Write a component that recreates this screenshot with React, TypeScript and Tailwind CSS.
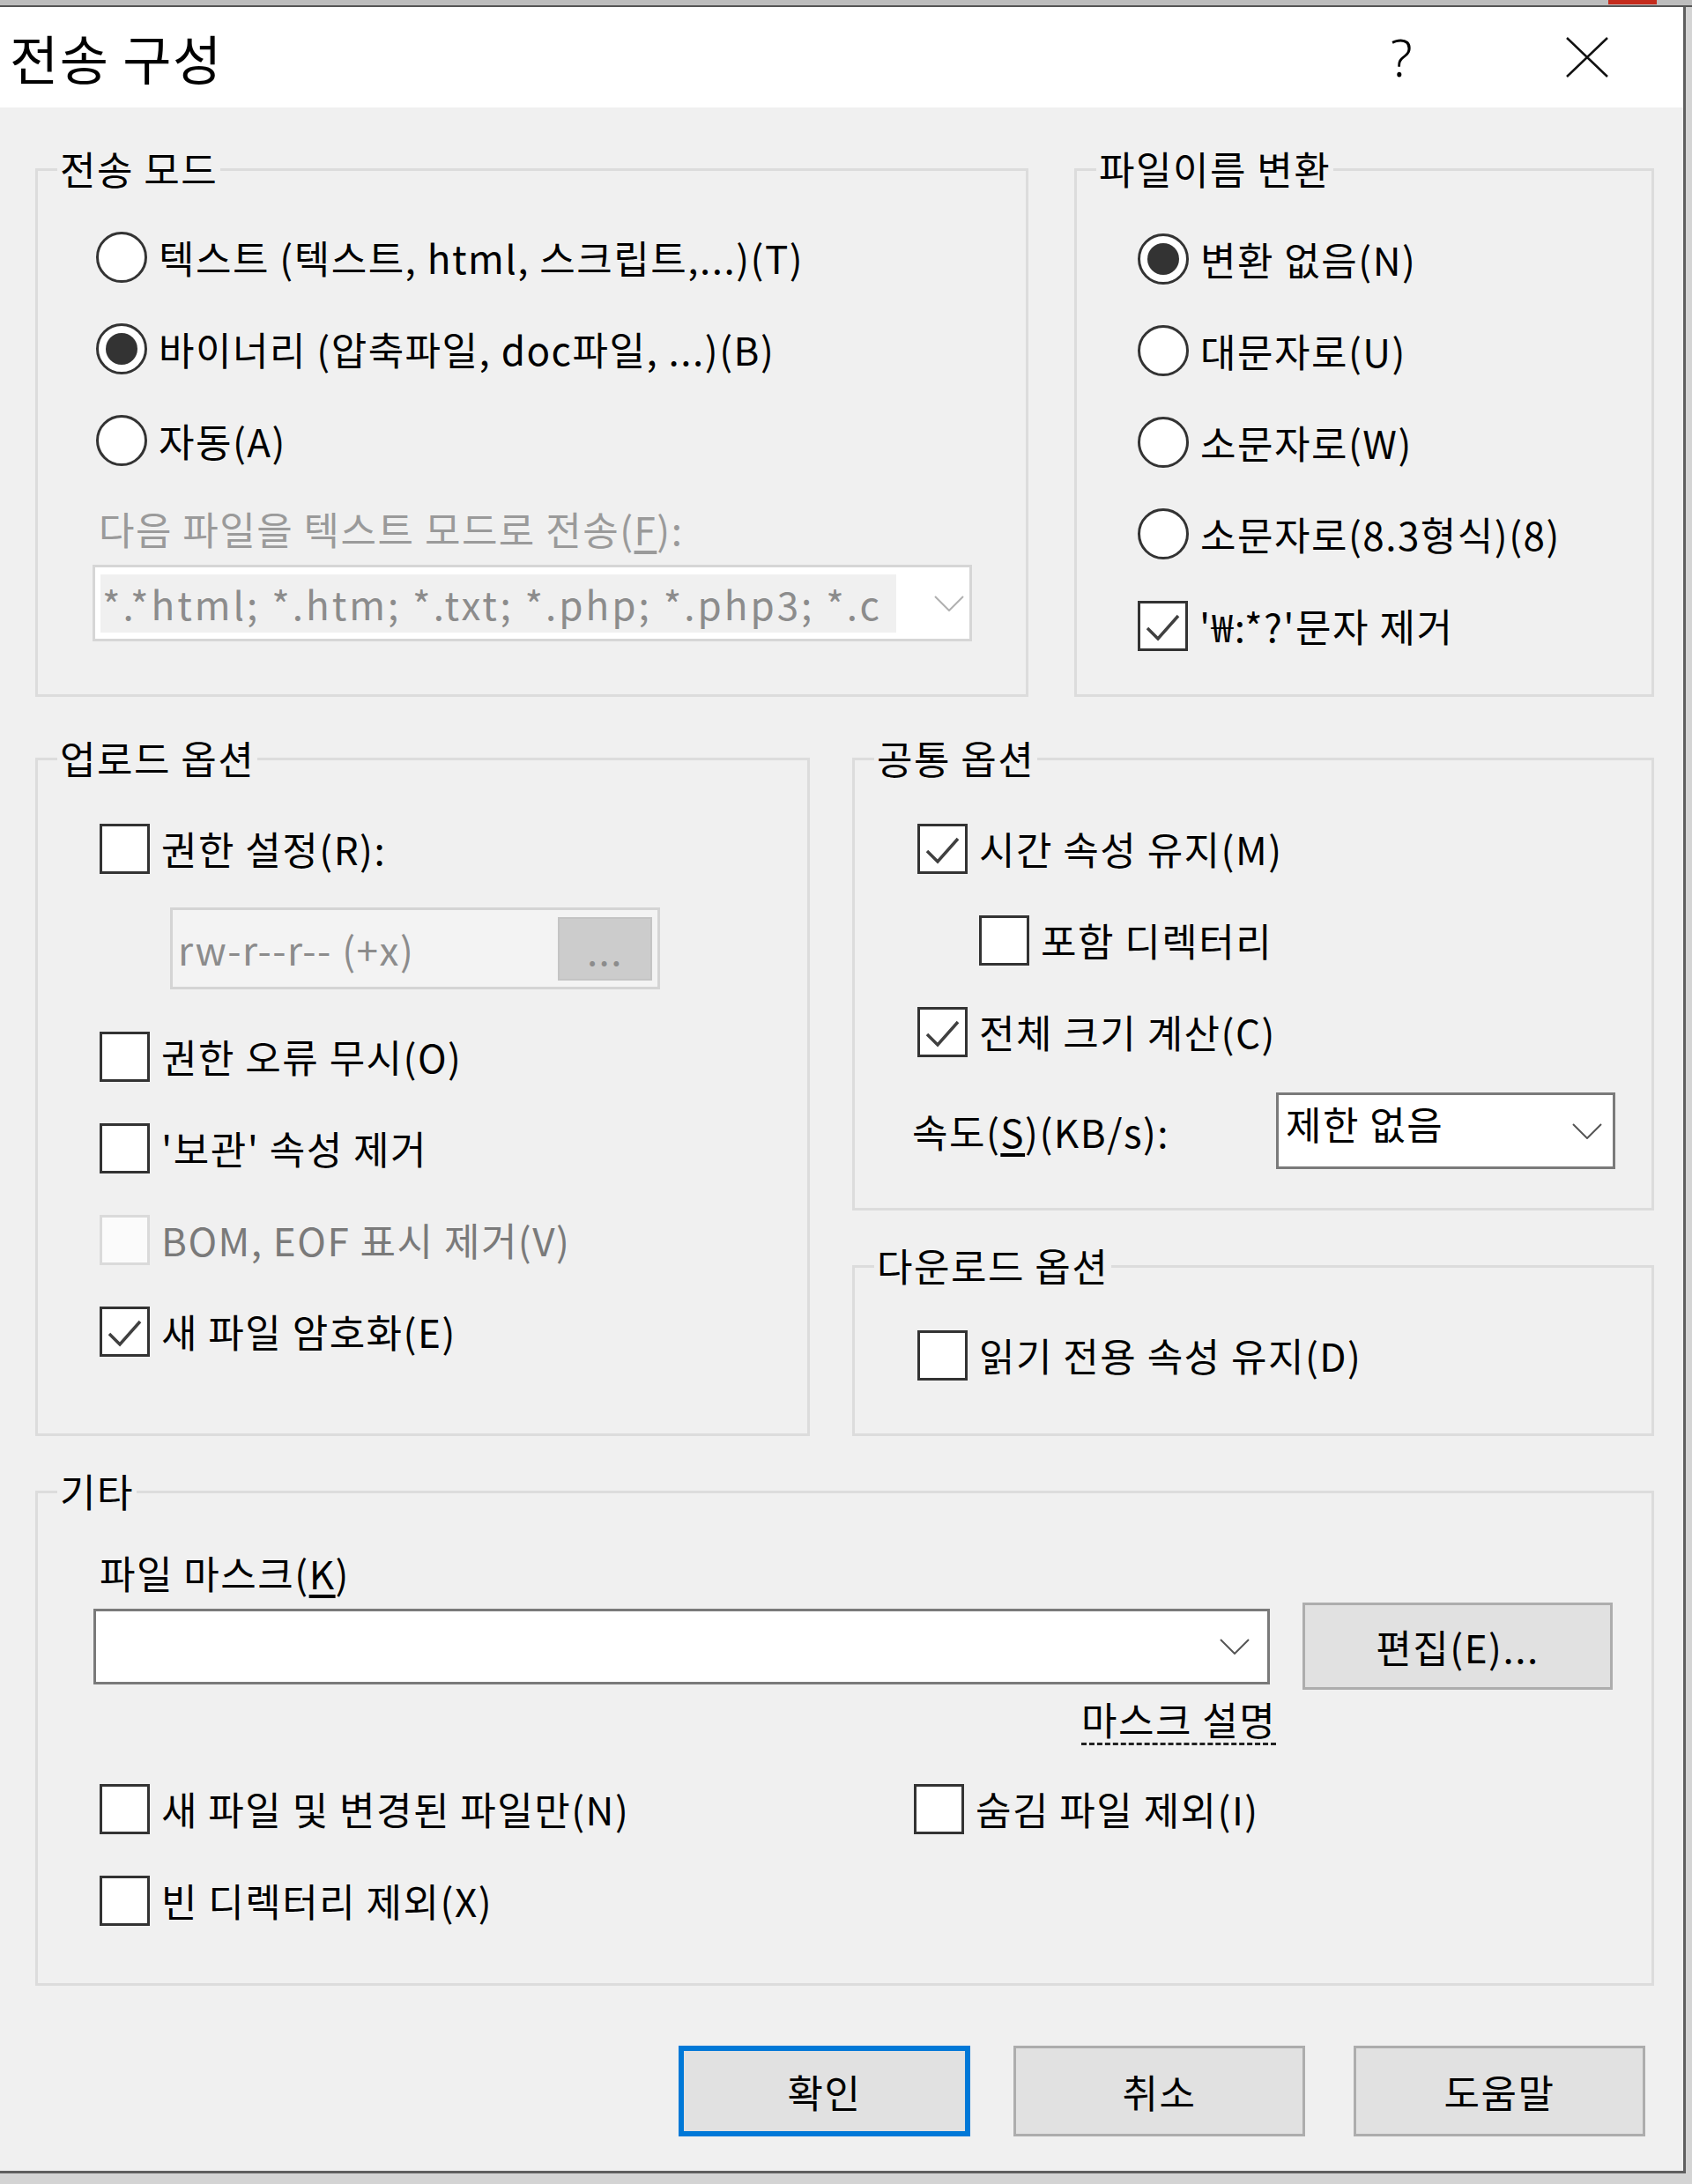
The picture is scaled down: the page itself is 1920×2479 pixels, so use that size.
import type { ReactNode } from 'react';

const FONT = "font-['Noto_Sans_CJK_KR','Noto_Sans',sans-serif]";
const TXT = 'text-[44px] leading-[52px] tracking-[1.5px]';

function CheckMark() {
  return (
    <svg width="51" height="51" viewBox="0 0 51 51" fill="none">
      <path d="M8 28 L20 40 L43 14" stroke="#404040" strokeWidth="3.5" />
    </svg>
  );
}

function Check({ checked = false, disabled = false }: { checked?: boolean; disabled?: boolean }) {
  return (
    <span
      className={`flex h-[57px] w-[57px] shrink-0 items-center justify-center border-[3px] ${
        disabled ? 'border-[#dadada] bg-[#fbfbfb]' : 'border-[#333] bg-white'
      }`}
    >
      {checked && <CheckMark />}
    </span>
  );
}

function Radio({ on = false }: { on?: boolean }) {
  return (
    <span className="flex h-[58px] w-[58px] shrink-0 items-center justify-center rounded-full border-[3px] border-[#333] bg-white">
      {on && <span className="h-[36px] w-[36px] rounded-full bg-[#333]" />}
    </span>
  );
}

function Chevron({ color = '#555' }: { color?: string }) {
  return (
    <svg width="34" height="18" viewBox="0 0 34 18" fill="none">
      <path d="M1 1 L17 17 L33 1" stroke={color} strokeWidth="2" />
    </svg>
  );
}

function Option({ control, label, className = '', muted = false }: { control: ReactNode; label: ReactNode; className?: string; muted?: boolean }) {
  return (
    <div className={`flex h-[104px] items-center gap-[13px] ${className}`}>
      {control}
      <span className={`whitespace-nowrap ${TXT} ${muted ? 'text-[#7a7a7a]' : 'text-black'}`}>{label}</span>
    </div>
  );
}

function Group({ title, className = '', children }: { title: string; className?: string; children?: ReactNode }) {
  return (
    <div className={`border-[3px] border-[#dcdcdc] ${className}`}>
      <div className="-mt-[29px] flex h-[52px]">
        <span className={`ml-[22px] whitespace-nowrap bg-[#f0f0f0] px-[3px] text-black ${TXT}`}>{title}</span>
      </div>
      {children}
    </div>
  );
}

function Button({ label, primary = false, className = '' }: { label: string; primary?: boolean; className?: string }) {
  return (
    <div
      className={`flex h-[103px] w-[331px] items-center justify-center bg-[#e1e1e1] text-black ${TXT} ${
        primary ? 'border-[6px] border-[#0078d7]' : 'border-[3px] border-[#adadad]'
      } ${className}`}
    >
      {label}
    </div>
  );
}

export default function App() {
  return (
    <div className={`flex h-[2479px] w-[1920px] flex-col overflow-hidden bg-[#d4d4d4] ${FONT}`}>
      {/* window behind the dialog */}
      <div className="flex h-[8px] shrink-0 border-b-[2px] border-[#555] bg-[#bdbdbd]">
        <div className="ml-[1825px] h-[5px] w-[55px] bg-[#c42b1c]" />
      </div>

      <div className="flex h-[2459px] w-[1913px] shrink-0 flex-col border-r-[3px] border-b-[3px] border-[#5f5f5f] bg-[#f0f0f0]">
        {/* title bar */}
        <div className="flex h-[114px] shrink-0 items-center bg-white">
          <div className="w-[1578px] shrink-0 pl-[11px]">
            <span className="text-[60px] leading-none tracking-[1.5px] text-black">전송 구성</span>
          </div>
          <span className="font-['Noto_Sans',sans-serif] text-[58px] font-light leading-none text-black">?</span>
          <svg className="ml-[174px]" width="48" height="46" viewBox="0 0 48 46" fill="none">
            <path d="M1 1 L47 45 M47 1 L1 45" stroke="#111" strokeWidth="2.5" />
          </svg>
        </div>

        <div className="flex flex-col pl-[40px] pr-[33px] pt-[69px]">
          {/* row 1 */}
          <div className="flex justify-between">
            <Group title="전송 모드" className="h-[600px] w-[1127px]">
              <div className="mt-[23px] ml-[66px]">
                <Option control={<Radio />} label="텍스트 (텍스트, html, 스크립트,...)(T)" />
                <Option control={<Radio on />} label="바이너리 (압축파일, doc파일, ...)(B)" />
                <Option control={<Radio />} label="자동(A)" />
              </div>
              <div className={`ml-[69px] mt-[22px] h-[52px] text-[#9a9a9a] ${TXT}`}>
                다음 파일을 텍스트 모드로 전송(<u className="underline-offset-[6px]">F</u>):
              </div>
              <div className="ml-[62px] mt-[15px] flex h-[87px] w-[998px] items-center border-[3px] border-[#d6d6d6] bg-white">
                <div className="ml-[6px] flex h-[66px] w-[903px] items-center bg-[#f0f0f0]">
                  <span className="ml-[2px] whitespace-nowrap text-[44px] leading-[52px] tracking-[3px] text-[#8c8c8c]">
                    *.*html; *.htm; *.txt; *.php; *.php3; *.c
                  </span>
                </div>
                <span className="ml-[43px]">
                  <Chevron color="#b0b0b0" />
                </span>
              </div>
            </Group>

            <Group title="파일이름 변환" className="h-[600px] w-[658px]">
              <div className="mt-[25px] ml-[69px]">
                <Option control={<Radio on />} label="변환 없음(N)" />
                <Option control={<Radio />} label="대문자로(U)" />
                <Option control={<Radio />} label="소문자로(W)" />
                <Option control={<Radio />} label="소문자로(8.3형식)(8)" />
                <Option control={<Check checked />} label="'₩:*?'문자 제거" />
              </div>
            </Group>
          </div>

          {/* row 2 */}
          <div className="mt-[69px] flex justify-between">
            <Group title="업로드 옵션" className="h-[770px] w-[879px]">
              <div className="ml-[70px] mt-[25px]">
                <Option control={<Check />} label="권한 설정(R):" />
              </div>
              <div className="ml-[150px] mt-[15px] flex h-[93px] w-[556px] items-center border-[3px] border-[#d4d4d4] bg-[#f3f3f3]">
                <span className={`ml-[6px] whitespace-nowrap text-[#8c8c8c] ${TXT}`}>rw-r--r-- (+x)</span>
                <span className={`ml-auto mr-[6px] flex h-[72px] w-[107px] items-start justify-center border-[2px] border-[#c4c4c4] bg-[#cccccc] pt-[8px] text-[#8c8c8c] ${TXT}`}>
                  ...
                </span>
              </div>
              <div className="ml-[70px] mt-[24px]">
                <Option control={<Check />} label="권한 오류 무시(O)" />
                <Option control={<Check />} label="'보관' 속성 제거" />
                <Option control={<Check disabled />} label="BOM, EOF 표시 제거(V)" muted />
                <Option control={<Check checked />} label="새 파일 암호화(E)" />
              </div>
            </Group>

            <div className="flex w-[910px] flex-col">
              <Group title="공통 옵션" className="h-[514px]">
                <div className="mt-[25px]">
                  <Option className="ml-[71px]" control={<Check checked />} label="시간 속성 유지(M)" />
                  <Option className="ml-[141px]" control={<Check />} label="포함 디렉터리" />
                  <Option className="ml-[71px]" control={<Check checked />} label="전체 크기 계산(C)" />
                </div>
                <div className="mt-[17px] flex h-[87px] items-center">
                  <span className={`ml-[65px] w-[413px] whitespace-nowrap text-black ${TXT}`}>
                    속도(<u className="underline-offset-[6px]">S</u>)(KB/s):
                  </span>
                  <div className="flex h-[87px] w-[385px] items-center border-[3px] border-[#7a7a7a] bg-white">
                    <span className={`ml-[8px] -mt-[18px] whitespace-nowrap text-black ${TXT}`}>제한 없음</span>
                    <span className="ml-auto mr-[12px]">
                      <Chevron />
                    </span>
                  </div>
                </div>
              </Group>

              <Group title="다운로드 옵션" className="mt-[62px] h-[194px]">
                <div className="ml-[71px] mt-[24px]">
                  <Option control={<Check />} label="읽기 전용 속성 유지(D)" />
                </div>
              </Group>
            </div>
          </div>

          {/* row 3 */}
          <Group title="기타" className="mt-[62px] h-[562px]">
            <div className={`ml-[70px] mt-[41px] h-[52px] text-black ${TXT}`}>
              파일 마스크(<u className="underline-offset-[6px]">K</u>)
            </div>
            <div className="mt-[8px] flex h-[99px] items-center">
              <div className="ml-[63px] flex h-[86px] w-[1335px] items-center border-[3px] border-[#7a7a7a] bg-white">
                <span className="ml-auto mr-[20px]">
                  <Chevron />
                </span>
              </div>
              <div className={`ml-[37px] flex h-[99px] w-[352px] items-center justify-center border-[3px] border-[#adadad] bg-[#e1e1e1] text-black ${TXT}`}>
                편집(E)...
              </div>
            </div>
            <div className="ml-[1184px] mt-[7px] flex">
              <span className={`border-b-[3px] border-dashed border-[#222] pb-[1px] text-black ${TXT}`}>마스크 설명</span>
            </div>
            <div className="ml-[70px] mt-[20px] flex">
              <Option className="w-[924px]" control={<Check />} label="새 파일 및 변경된 파일만(N)" />
              <Option control={<Check />} label="숨김 파일 제외(I)" />
            </div>
            <div className="ml-[70px]">
              <Option control={<Check />} label="빈 디렉터리 제외(X)" />
            </div>
          </Group>

          {/* buttons */}
          <div className="mt-[68px] flex justify-end pr-[10px]">
            <Button label="확인" primary />
            <Button label="취소" className="ml-[49px]" />
            <Button label="도움말" className="ml-[55px]" />
          </div>
        </div>
      </div>
    </div>
  );
}
